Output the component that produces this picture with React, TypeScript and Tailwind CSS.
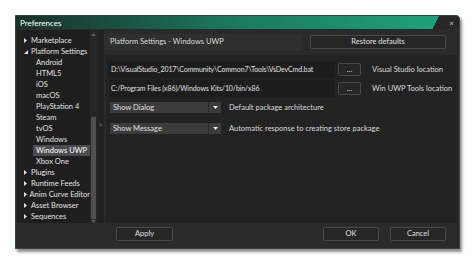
import React from 'react';

const font = { fontFamily: 'Lato, "Open Sans", sans-serif' };

const tree: { label: string; level: number; arrow?: 'closed' | 'open'; selected?: boolean }[] = [
  { label: 'Marketplace', level: 0, arrow: 'closed' },
  { label: 'Platform Settings', level: 0, arrow: 'open' },
  { label: 'Android', level: 1 },
  { label: 'HTML5', level: 1 },
  { label: 'iOS', level: 1 },
  { label: 'macOS', level: 1 },
  { label: 'PlayStation 4', level: 1 },
  { label: 'Steam', level: 1 },
  { label: 'tvOS', level: 1 },
  { label: 'Windows', level: 1 },
  { label: 'Windows UWP', level: 1, selected: true },
  { label: 'Xbox One', level: 1 },
  { label: 'Plugins', level: 0, arrow: 'closed' },
  { label: 'Runtime Feeds', level: 0, arrow: 'closed' },
  { label: 'Anim Curve Editor', level: 0, arrow: 'closed' },
  { label: 'Asset Browser', level: 0, arrow: 'closed' },
  { label: 'Sequences', level: 0, arrow: 'closed' },
];

function Btn({ children, className }: { children: React.ReactNode; className: string }) {
  return (
    <div
      className={`flex items-center justify-center border border-[#4a4a4a] bg-[#262626] rounded-[2px] text-[7.5px] text-[#e0e0e0] ${className}`}
    >
      {children}
    </div>
  );
}

function Dropdown({ value, label }: { value: string; label: string }) {
  return (
    <div className="flex items-center h-[11px]">
      <div className="flex w-[111px] h-[11px] bg-[#3b3b3b]">
        <div className="flex-1 flex items-center pl-[3px] text-[7.5px] text-[#e0e0e0]">{value}</div>
        <div className="w-[13px] flex items-center justify-center border-l border-[#2a2a2a]">
          <svg width="5" height="3" viewBox="0 0 5 3">
            <path d="M0 0h5L2.5 3z" fill="#e8e8e8" />
          </svg>
        </div>
      </div>
      <div className="ml-[8px] text-[7.5px] text-[#dcdcdc]">{label}</div>
    </div>
  );
}

function PathRow({ value, label }: { value: string; label: string }) {
  return (
    <div className="flex items-center h-[17px]">
      <div className="w-[226px] h-[17px] bg-[#1d1d1d] flex items-center pl-[2px] text-[7px] tracking-[-0.1px] text-[#e0e0e0] whitespace-nowrap overflow-hidden">
        {value}
      </div>
      <Btn className="ml-[3px] w-[23px] h-[13px] text-[#bbb]">...</Btn>
      <div className="ml-[11px] text-[7.5px] text-[#dcdcdc]">{label}</div>
    </div>
  );
}

export default function App() {
  return (
    <div className="w-[474px] h-[268px] bg-white pt-[15px] pl-[15px]" style={font}>
      <div className="w-[445px] h-[234px] flex flex-col bg-[#2a2a2a] border border-[#2f4840] rounded-tr-[4px] shadow-[2px_3px_3px_rgba(0,0,0,0.45)] overflow-hidden">
        {/* title bar */}
        <div className="h-[13px] flex bg-[linear-gradient(to_right,#183028,#1b7a60_50%,#1ea580)]">
          <div className="flex-1 flex items-center pl-[4px] text-[8px] text-white">Preferences</div>
          <div className="w-[30px] flex items-center justify-end pr-[5px] bg-[linear-gradient(118deg,transparent_9px,#262626_9px)]">
            <span className="text-[8px] leading-none text-[#cfcfcf]">×</span>
          </div>
        </div>

        {/* body */}
        <div className="h-[194px] flex pl-[1px] pt-[1px]">
          {/* tree */}
          <div className="w-[80px] h-[193px] flex bg-[#1e1e1e]">
            <div className="flex-1 flex flex-col pt-[5px] overflow-hidden">
              {tree.map((t) => (
                <div
                  key={t.label}
                  className={`h-[11px] flex items-center text-[7.5px] whitespace-nowrap ${
                    t.selected ? 'bg-[#4a4c50] text-white ml-[16px] pl-[3px]' : 'text-[#e2e2e2]'
                  } ${!t.selected && t.level === 1 ? 'pl-[19px]' : ''} ${t.level === 0 ? 'pl-[7px]' : ''}`}
                >
                  {t.level === 0 && (
                    <span className="w-[7px] flex items-center">
                      {t.arrow === 'closed' ? (
                        <svg width="3" height="5" viewBox="0 0 3 5">
                          <path d="M0 0l3 2.5L0 5z" fill="#e0e0e0" />
                        </svg>
                      ) : (
                        <svg width="4" height="4" viewBox="0 0 4 4">
                          <path d="M4 0v4H0z" fill="#e0e0e0" />
                        </svg>
                      )}
                    </span>
                  )}
                  {t.label}
                </div>
              ))}
            </div>
            {/* scrollbar */}
            <div className="w-[7px] flex flex-col items-center bg-[#262626]">
              <svg width="5" height="3" viewBox="0 0 5 3" className="mt-[3px]">
                <path d="M0 3h5L2.5 0z" fill="#5a5a5a" />
              </svg>
              <div className="mt-[81px] w-[5px] h-[102px] bg-[#505050]" />
              <svg width="5" height="3" viewBox="0 0 5 3" className="mt-[1px]">
                <path d="M0 0h5L2.5 3z" fill="#5a5a5a" />
              </svg>
            </div>
          </div>

          {/* splitter */}
          <div className="w-[7px] flex items-center justify-center bg-[#222222]">
            <span className="text-[7px] text-[#8a8a8a] -mt-[4px]">«</span>
          </div>

          {/* right panel */}
          <div className="flex-1 flex flex-col pr-[2px]">
            <div className="h-[22px] flex items-center pt-[2px]">
              <div className="w-[197px] h-[16px] flex items-center pl-[6px] bg-[#2f2f2f] text-[7.5px] text-[#dcdcdc]">
                Platform Settings - Windows UWP
              </div>
              <Btn className="ml-[9px] w-[136px] h-[14px]">Restore defaults</Btn>
            </div>
            <div className="h-[3px]" />
            <div className="flex-1 ml-[2px] bg-[#222222] pt-[6px] pl-[3px] flex flex-col">
              <PathRow value="D:\VisualStudio_2017\Community\Common7\Tools\VsDevCmd.bat" label="Visual Studio location" />
              <div className="h-[2px]" />
              <PathRow value="C:/Program Files (x86)/Windows Kits/10/bin/x86" label="Win UWP Tools location" />
              <div className="pl-[1px] pt-[5px] flex flex-col gap-[10px]">
                <Dropdown value="Show Dialog" label="Default package architecture" />
                <Dropdown value="Show Message" label="Automatic response to creating store package" />
              </div>
            </div>
          </div>
        </div>

        {/* footer */}
        <div className="flex-1 flex items-start pt-[4px] pl-[100px]">
          <Btn className="w-[57px] h-[14px]">Apply</Btn>
          <div className="w-[150px]" />
          <Btn className="w-[56px] h-[14px]">OK</Btn>
          <Btn className="ml-[11px] w-[56px] h-[14px]">Cancel</Btn>
        </div>
      </div>
    </div>
  );
}
